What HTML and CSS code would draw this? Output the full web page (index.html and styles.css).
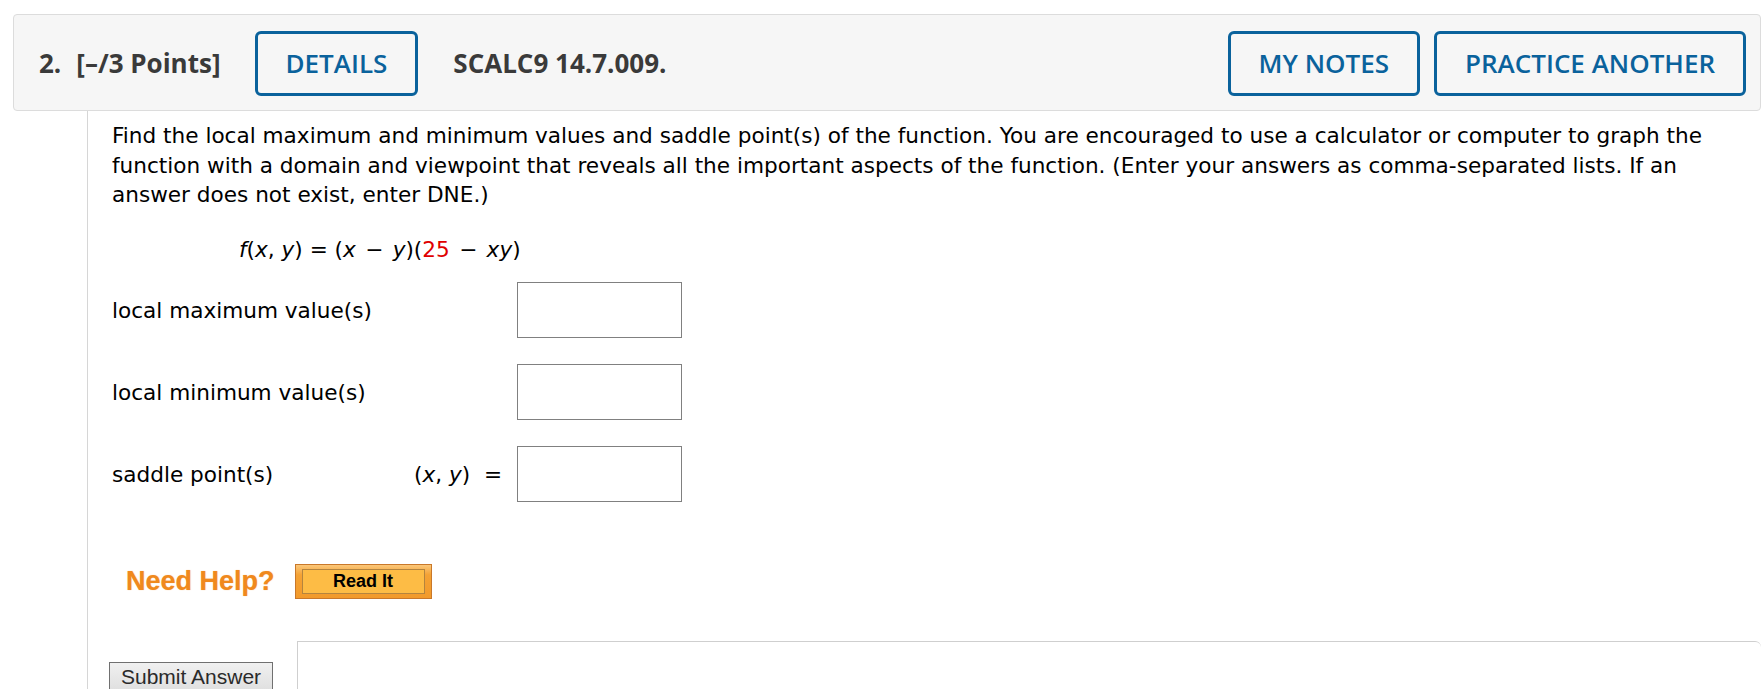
FILE: index.html
```html
<!DOCTYPE html>
<html>
<head>
<meta charset="utf-8">
<link rel="stylesheet" href="styles.css">
</head>
<body>
<div class="qheader">
  <span class="qnum">2.</span>
  <span class="qpoints">[&ndash;/3 Points]</span>
  <button class="hbtn details">DETAILS</button>
  <span class="qid">SCALC9 14.7.009.</span>
  <div class="hspacer"></div>
  <button class="hbtn">MY NOTES</button>
  <button class="hbtn">PRACTICE ANOTHER</button>
</div>
<div class="content">
  <p class="prompt">Find the local maximum and minimum values and saddle point(s) of the function. You are encouraged to use a calculator or computer to graph the function with a domain and viewpoint that reveals all the important aspects of the function. (Enter your answers as comma-separated lists. If an answer does not exist, enter DNE.)</p>
  <div class="formula"><i>f</i>(<i>x</i>, <i>y</i>) = (<i>x</i> <span class="op">&minus;</span> <i>y</i>)(<span class="red">25</span> <span class="op">&minus;</span> <i>xy</i>)</div>
  <div class="answers">
    <div class="label">local maximum value(s)</div>
    <div class="prefix"></div>
    <input class="ans" type="text">
    <div class="label">local minimum value(s)</div>
    <div class="prefix"></div>
    <input class="ans" type="text">
    <div class="label">saddle point(s)</div>
    <div class="prefix">(<i>x</i>, <i>y</i>)&nbsp; =</div>
    <input class="ans" type="text">
  </div>
  <div class="help">
    <span class="needhelp">Need Help?</span>
    <button class="readit"><span>Read It</span></button>
  </div>
  <div class="submitrow">
    <button class="submit">Submit Answer</button>
    <div class="tipbox"></div>
  </div>
</div>
</body>
</html>
```
FILE: styles.css
```css
html, body {
  margin: 0;
  padding: 0;
  background: #ffffff;
  overflow: hidden;
}
body {
  width: 1761px;
  height: 689px;
}
.qheader {
  box-sizing: border-box;
  margin: 14px 0 0 13px;
  width: 1748px;
  height: 97px;
  background: #f6f6f6;
  border: 1px solid #dcdcdc;
  border-radius: 4px;
  display: flex;
  align-items: center;
  padding: 0 14px 0 25px;
  font-family: "Open Sans", sans-serif;
  color: #3a3a3a;
}
.qnum {
  font-size: 26px;
  font-weight: 700;
}
.qpoints {
  font-size: 26px;
  font-weight: 700;
  margin-left: 15px;
}
.qid {
  font-size: 26px;
  font-weight: 700;
  margin-left: 35px;
}
.hspacer {
  flex: 1;
}
.hbtn {
  box-sizing: border-box;
  height: 65px;
  margin-top: 1px;
  border: 3px solid #0a629c;
  border-radius: 6px;
  background: transparent;
  color: #0a629c;
  font-family: "Open Sans", sans-serif;
  font-size: 26px;
  font-weight: 600;
  padding: 0 28px;
  margin-left: 14px;
}
.details {
  margin-left: 34px;
}
.content {
  margin-left: 87px;
  border-left: 1px solid #d6d6d6;
  padding-left: 24px;
  height: 600px;
  font-family: "DejaVu Sans", Verdana, sans-serif;
  font-size: 21.6px;
  color: #000;
}
.prompt {
  margin: 0;
  padding-top: 10px;
  line-height: 29.5px;
  padding-right: 18px;
}
.formula {
  margin-top: 25px;
  line-height: 29.5px;
  padding-left: 127px;
}
.formula i, .prefix i {
  font-style: italic;
}
.op {
  margin: 0 2.5px;
}
.red {
  color: #e00000;
}
.answers {
  margin-top: 18px;
  display: grid;
  grid-template-columns: 290px 115px 165px;
  row-gap: 26px;
  align-items: center;
}
.prefix {
  text-align: right;
  padding-right: 15px;
}
.ans {
  box-sizing: border-box;
  width: 165px;
  height: 56px;
  border: 1px solid #808080;
  margin: 0;
  background: #fff;
}
.help {
  margin-top: 62px;
  display: flex;
  align-items: center;
  height: 35px;
}
.needhelp {
  font-family: "Liberation Sans", Arial, sans-serif;
  font-weight: 700;
  font-size: 27px;
  color: #f0891d;
  margin-left: 14px;
  text-shadow: 0 0 1px rgba(240, 137, 29, 0.6);
}
.readit {
  box-sizing: border-box;
  margin-left: 20px;
  width: 137px;
  height: 35px;
  padding: 4px 6px;
  border: 1px solid #c9782a;
  background: linear-gradient(#fbc77a, #f4a234 30%, #f29a2b);
  display: flex;
}
.readit span {
  flex: 1;
  border: 1px solid #b4843e;
  background: #fdbc45;
  font-family: "Liberation Sans", Arial, sans-serif;
  font-weight: 700;
  font-size: 18px;
  color: #000;
  line-height: 23px;
  text-align: center;
}
.submitrow {
  margin-top: 42px;
  display: flex;
  align-items: flex-start;
  margin-left: -3px;
}
.submit {
  margin-top: 21px;
  font-family: "Liberation Sans", Arial, sans-serif;
  font-size: 21px;
  color: #2a2a2a;
  background: linear-gradient(#f0f0f0, #dedede);
  border: 1px solid #707070;
  padding: 2px 9px 4px 11px;
  width: 164px;
  text-align: left;
}
.tipbox {
  margin-left: 24px;
  flex: 1;
  height: 60px;
  border-top: 1px solid #cfcfcf;
  border-left: 1px solid #cfcfcf;
  border-top-right-radius: 6px;
}
```
